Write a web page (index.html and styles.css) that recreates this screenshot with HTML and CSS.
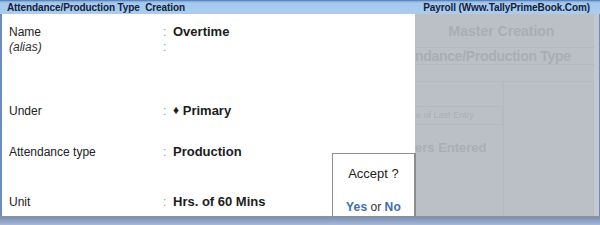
FILE: index.html
```html
<!DOCTYPE html>
<html>
<head>
<meta charset="utf-8">
<link rel="stylesheet" href="styles.css">
</head>
<body>
<div class="screen">
  <div class="topbar">
    <span class="title">Attendance/Production Type&nbsp; Creation</span>
    <span class="company">Payroll (Www.TallyPrimeBook.Com)</span>
  </div>
  <div class="main">
    <div class="form">
      <div class="row r-name"><span class="label">Name</span><span class="colon">:</span><span class="value">Overtime</span></div>
      <div class="row r-alias"><span class="label alias">(alias)</span><span class="colon">:</span><span class="value"></span></div>
      <div class="row r-under"><span class="label">Under</span><span class="colon">:</span><span class="value"><span class="dia">&#9830;</span> Primary</span></div>
      <div class="row r-type"><span class="label">Attendance type</span><span class="colon">:</span><span class="value">Production</span></div>
      <div class="row r-unit"><span class="label">Unit</span><span class="colon">:</span><span class="value">Hrs. of 60 Mins</span></div>
    </div>
    <div class="bg">
      <div class="bg-title">Master Creation</div>
      <div class="bg-sub">ndance/Production Type</div>
      <div class="bg-body">
        <div class="bg-left">
          <div class="bg-box">e of Last Entry</div>
          <div class="bg-count">ers Entered</div>
        </div>
        <div class="bg-right"></div>
      </div>
    </div>
    <div class="edge"></div>
    <div class="accept">
      <div class="q">Accept ?</div>
      <div class="yn"><span class="blue">Yes</span> or <span class="blue">No</span></div>
    </div>
  </div>
  <div class="bottombar"></div>
</div>
</body>
</html>
```
FILE: styles.css
```css
html, body { margin: 0; padding: 0; }
body { width: 600px; height: 225px; overflow: hidden; background: #fff; font-family: "Liberation Sans", Arial, sans-serif; }
.screen { width: 600px; height: 225px; display: flex; flex-direction: column; }
.topbar {
  height: 14px; flex: none; box-sizing: border-box;
  background: linear-gradient(#7fa9da 0, #a6c9ef 2px, #a9ccf0 100%);
  border-top: 1px solid #5d86bf;
  display: flex; justify-content: space-between; align-items: center;
  padding: 0 10px 0 7px;
  font-size: 10px; font-weight: bold; color: #15213a; letter-spacing: -0.1px;
}
.main { flex: 1; display: flex; position: relative; border-left: 2px solid #6a8cc2; }
.form { width: 413px; flex: none; background: #fff; box-sizing: border-box; padding: 10px 0 0 7px; }
.row { display: grid; grid-template-columns: 154px 10px 1fr; align-items: baseline; height: 16px; }
.label { font-size: 12px; color: #222; }
.alias { font-style: italic; color: #333; }
.colon { font-size: 12px; color: #a0a0a0; }
.value { font-size: 13px; font-weight: bold; color: #1c1c1c; }
.dia { font-size: 12px; position: relative; top: -1px; }
.r-under { margin-top: 47px; }
.r-type { margin-top: 25px; }
.r-unit { margin-top: 34px; }
.bg { flex: 1; background: #bbc0c7; display: flex; flex-direction: column; color: #a9aeb5; }
.bg-title { text-align: center; font-size: 14px; font-weight: bold; height: 33px; line-height: 34px; padding-right: 6px; }
.bg-sub { font-size: 14px; font-weight: bold; letter-spacing: -0.3px; height: 16px; line-height: 16px; border-top: 1px solid #b2b8bf; border-bottom: 1px solid #b2b8bf; white-space: nowrap; overflow: hidden; }
.bg-body { flex: 1; display: flex; margin-top: 16px; border-top: 1px solid #b4bac1; }
.bg-left { width: 88px; border-right: 1px solid #b4bac1; padding-top: 24px; }
.bg-box { height: 17px; border: 1px solid #b3b9c0; border-left: none; font-size: 9px; line-height: 17px; white-space: nowrap; overflow: hidden; padding-left: 1px; }
.bg-count { font-size: 13px; font-weight: bold; margin-top: 15px; white-space: nowrap; }
.bg-right { flex: 1; border-right: 1px solid #b4bac1; }
.edge { width: 5px; flex: none; background: #c3c8ce; border-right: 1px solid #6a8cc2; }
.accept {
  position: absolute; left: 330px; top: 139px; width: 81px; height: 62px;
  background: #fff; border: 1px solid #8d8d8d; border-right: 2px solid #8d8d8d;
  text-align: center; color: #222;
}
.q { font-size: 13px; margin-top: 12px; }
.yn { font-size: 12px; margin-top: 19px; color: #333; }
.blue { color: #3c6eb4; font-weight: bold; letter-spacing: 0.2px; }
.bottombar { height: 9px; flex: none; box-sizing: border-box; border-top: 2px solid #8a929c; background: linear-gradient(#7d93bb, #a7b9d8); }
```
